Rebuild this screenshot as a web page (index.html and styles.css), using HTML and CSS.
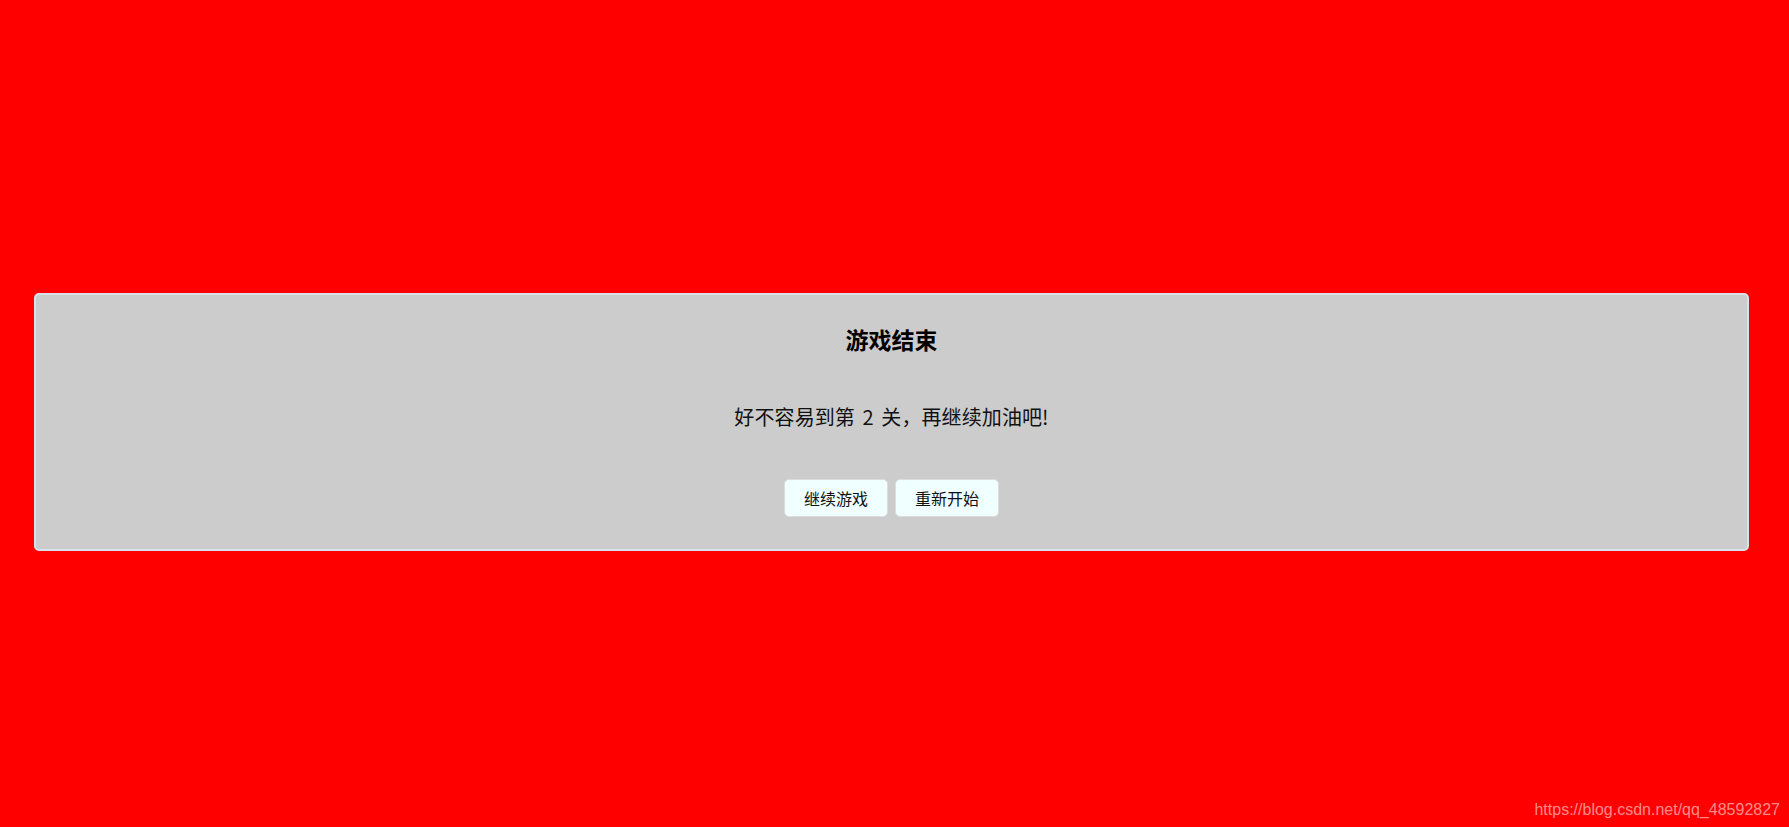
FILE: index.html
```html
<!DOCTYPE html>
<html lang="zh-CN">
<head>
<meta charset="utf-8">
<title>游戏结束</title>
<link rel="stylesheet" href="styles.css">
</head>
<body>
<div class="page">
  <div class="dialog">
    <h2 class="title">游戏结束</h2>
    <p class="message">好不容易到第 2 关，再继续加油吧!</p>
    <div class="actions">
      <button class="btn">继续游戏</button>
      <button class="btn">重新开始</button>
    </div>
  </div>
</div>
<div class="watermark">https://blog.csdn.net/qq_48592827</div>
</body>
</html>
```

FILE: styles.css
```css
html, body {
  margin: 0;
  padding: 0;
  height: 100%;
}
body {
  background: #ff0000;
  font-family: "Noto Sans CJK SC", "Noto Sans", sans-serif;
  overflow: hidden;
}
.page {
  padding: 293px 40px 0 34px;
}
.dialog {
  background: #cccccc;
  border: 2px solid #d6e3ea;
  border-radius: 5px;
  padding: 28px 0 32px;
  display: flex;
  flex-direction: column;
  align-items: center;
}
.title {
  margin: 0;
  font-size: 23px;
  line-height: 32px;
  font-weight: bold;
  color: #000;
}
.message {
  margin: 48px 0 0;
  font-size: 20px;
  line-height: 28px;
  color: #111;
  word-spacing: 3px;
  letter-spacing: 0.1px;
}
.actions {
  margin-top: 48px;
  display: flex;
  gap: 7px;
}
.btn {
  width: 104px;
  height: 38px;
  background: #f0ffff;
  border: 1px solid #dcdcdc;
  border-radius: 5px;
  font-family: "Noto Sans CJK SC", sans-serif;
  font-size: 16px;
  color: #111;
  padding: 0;
}
.watermark {
  position: absolute;
  right: 9px;
  bottom: 8px;
  font-family: "Liberation Sans", Arial, sans-serif;
  font-size: 16px;
  color: rgba(255, 255, 255, 0.55);
}
```
